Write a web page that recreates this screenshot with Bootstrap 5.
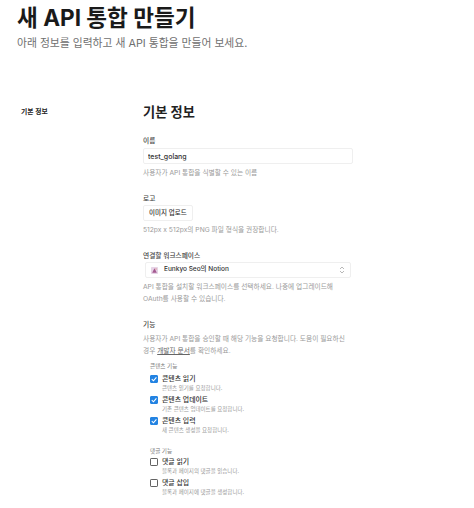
<!DOCTYPE html>
<html lang="ko"><head><meta charset="utf-8">
<link href="https://cdn.jsdelivr.net/npm/bootstrap@5.3.0/dist/css/bootstrap.min.css" rel="stylesheet">
<style>
html,body{height:508px;overflow:hidden}
body{font-family:Inter,"Noto Sans CJK KR",sans-serif;color:#37352f;background:#fff}
.pg{padding:2px 0 0 17px}
.ttl{font-size:22.6px;line-height:32px;font-weight:700;color:#1a1a1a;margin:0}
.sub{font-size:10.8px;line-height:16px;color:#6f6f6f;margin:2px 0 0}
.cols{margin-top:51px}
.side{width:126px;padding:4px 0 0 4px;font-size:6.8px;font-weight:600;line-height:10px;color:#222}
.mainc{width:210px}
.h2x{font-size:13.2px;font-weight:600;line-height:18px;margin:0 0 13px;color:#222}
.lbl{font-size:6.7px;line-height:10px;font-weight:500;color:#444;padding-top:2px;margin-bottom:2px;display:block}
.lb3{margin-bottom:1px}
.hint{font-size:6.7px;line-height:12px;color:#9a9a9a;margin:3px 0 0}
.blk{margin-bottom:13px}
.inp{height:16px;border:1px solid #efefef;border-radius:2px;font-size:7px;padding:0 4px;color:#333;min-height:0;font-weight:500}
.upl{height:16px;border:1px solid #efefef;border-radius:2px;font-size:6.5px;font-weight:500;padding:0 5px;color:#333;line-height:14px;background:#fff;display:block;margin-bottom:1px}
.wsp{height:16px;margin:0 2px;border:1px solid #efefef;border-radius:2px;padding:0 5px 0 5px;font-size:6.5px;font-weight:500;color:#333}
.av{width:7px;height:7px;display:block;margin-right:6px}
.chev{width:6px;height:8px;display:block}
.grp{margin:5px 0 0 7px}
.gl{font-size:5.6px;line-height:9px;color:#777;margin:0 0 3px}
.it{gap:4px;height:21px}
.bx{width:8px;height:8px;border-radius:1px;flex:none;margin-top:1px;display:block}
.nm{font-size:6.9px;line-height:10px;font-weight:500;color:#333}
.ds{font-size:5.5px;line-height:9px;color:#999}
.gap2{margin:10px 0 1px}
a.dl{color:#666}
</style></head><body>
<div class="pg">
<h1 class="ttl">새 API 통합 만들기</h1>
<p class="sub">아래 정보를 입력하고 새 API 통합을 만들어 보세요.</p>
<div class="d-flex cols">
<div class="side flex-shrink-0">기본 정보</div>
<div class="mainc flex-shrink-0">
<h2 class="h2x">기본 정보</h2>
<div class="blk"><label class="lbl">이름</label><input class="form-control inp" value="test_golang"><p class="hint">사용자가 API 통합을 식별할 수 있는 이름</p></div>
<div class="blk"><label class="lbl lb3">로고</label><button class="btn upl">이미지 업로드</button><p class="hint">512px x 512px의 PNG 파일 형식을 권장합니다.</p></div>
<div class="blk"><label class="lbl lb3">연결할 워크스페이스</label>
<div class="wsp d-flex align-items-center"><svg class="av" viewBox="0 0 9 9"><rect width="9" height="9" rx="1" fill="#e6d3e6"/><path d="M4.5 1.5 7.5 7.5H1.5Z" fill="#a3588f"/><circle cx="6.5" cy="2.5" r="1" fill="#d99"/></svg><span class="flex-grow-1">Eunkyo Seo의 Notion</span><svg class="chev" viewBox="0 0 6 8" fill="none" stroke="#999" stroke-width=".7"><path d="M1 3 3 1 5 3M1 5 3 7 5 5"/></svg></div>
<p class="hint">API 통합을 설치할 워크스페이스를 선택하세요. 나중에 업그레이드해<br>OAuth를 사용할 수 있습니다.</p></div>
<div><label class="lbl lb3">기능</label><p class="hint">사용자가 API 통합을 승인할 때 해당 기능을 요청합니다. 도움이 필요하신<br>경우 <a class="dl" href="#">개발자 문서</a>를 확인하세요.</p>
<div class="grp">
<p class="gl">콘텐츠 기능</p>
<div class="d-flex it"><svg class="bx" viewBox="0 0 9 9"><rect width="9" height="9" rx="1" fill="#2383e2"/><path d="M2 4.6 3.9 6.5 7.2 2.6" fill="none" stroke="#fff" stroke-width="1.2"/></svg><div><div class="nm">콘텐츠 읽기</div><div class="ds">콘텐츠 읽기를 요청합니다.</div></div></div>
<div class="d-flex it"><svg class="bx" viewBox="0 0 9 9"><rect width="9" height="9" rx="1" fill="#2383e2"/><path d="M2 4.6 3.9 6.5 7.2 2.6" fill="none" stroke="#fff" stroke-width="1.2"/></svg><div><div class="nm">콘텐츠 업데이트</div><div class="ds">기존 콘텐츠 업데이트를 요청합니다.</div></div></div>
<div class="d-flex it"><svg class="bx" viewBox="0 0 9 9"><rect width="9" height="9" rx="1" fill="#2383e2"/><path d="M2 4.6 3.9 6.5 7.2 2.6" fill="none" stroke="#fff" stroke-width="1.2"/></svg><div><div class="nm">콘텐츠 입력</div><div class="ds">새 콘텐츠 생성을 요청합니다.</div></div></div>
<p class="gl gap2">댓글 기능</p>
<div class="d-flex it"><svg class="bx" viewBox="0 0 9 9"><rect x=".5" y=".5" width="8" height="8" rx=".8" fill="#fff" stroke="#444"/></svg><div><div class="nm">댓글 읽기</div><div class="ds">블록과 페이지의 댓글을 읽습니다.</div></div></div>
<div class="d-flex it"><svg class="bx" viewBox="0 0 9 9"><rect x=".5" y=".5" width="8" height="8" rx=".8" fill="#fff" stroke="#444"/></svg><div><div class="nm">댓글 삽입</div><div class="ds">블록과 페이지에 댓글을 생성합니다.</div></div></div>
</div></div>
</div></div></div>
</body></html>
